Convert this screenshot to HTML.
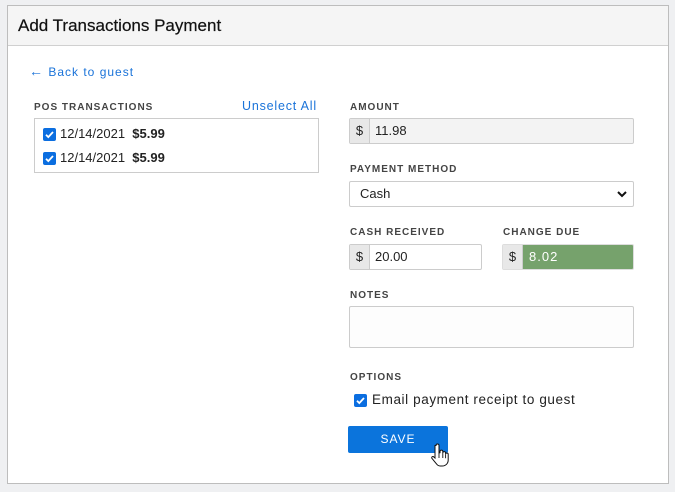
<!DOCTYPE html>
<html><head><style>
body{margin:0;width:675px;height:492px;background:#eff0f2;font-family:"Liberation Sans",sans-serif;position:relative;overflow:hidden}
.a{position:absolute}
.panel{left:7px;top:5px;width:660px;height:477px;background:#fff;border:1px solid #bdbdbd}
.hdr{left:0;top:0;width:660px;height:39px;background:#f5f5f5;border-bottom:1px solid #d0d0d0}
.lbl{font-size:10px;font-weight:bold;letter-spacing:1px;color:#444}
.inp{border:1px solid #ccc;border-radius:2px;height:26px;box-sizing:border-box;font-size:13px;color:#222}
.pre{position:absolute;left:0;top:0;bottom:0;width:19px;background:#e8e8e8;border-right:1px solid #ccc;text-align:center;line-height:24px}
.val{position:absolute;left:27px;top:0;line-height:24px}
</style></head><body>
<div class="a panel">
 <div class="a hdr"><div class="a" style="left:10px;top:10px;font-size:17px;color:#111;-webkit-text-stroke:0.2px #111">Add Transactions Payment</div></div>
</div>
<div class="a" style="left:29px;top:63px;font-size:12px;color:#1a73d9;letter-spacing:1px"><span style="font-size:14px">←</span> Back to guest</div>
<div class="a lbl" style="left:34px;top:102px">POS TRANSACTIONS</div>
<div class="a" style="left:242px;top:99px;font-size:12.5px;color:#1a73d9;letter-spacing:0.8px">Unselect All</div>
<div class="a" style="left:34px;top:118px;width:285px;height:55px;border:1px solid #ccc;box-sizing:border-box"></div>
<svg class="a" style="left:43px;top:128px" width="13" height="13"><rect width="13" height="13" rx="2" fill="#0b6ee0"/><path d="M3 6.8l2.3 2.3L10 4" stroke="#fff" stroke-width="1.8" fill="none"/></svg>
<div class="a" style="left:60px;top:126px;font-size:13px;color:#222">12/14/2021 &nbsp;<b>$5.99</b></div>
<svg class="a" style="left:43px;top:152px" width="13" height="13"><rect width="13" height="13" rx="2" fill="#0b6ee0"/><path d="M3 6.8l2.3 2.3L10 4" stroke="#fff" stroke-width="1.8" fill="none"/></svg>
<div class="a" style="left:60px;top:150px;font-size:13px;color:#222">12/14/2021 &nbsp;<b>$5.99</b></div>

<div class="a lbl" style="left:350px;top:102px">AMOUNT</div>
<div class="a inp" style="left:349px;top:118px;width:285px;background:#f3f3f3"><div class="pre">$</div><div class="val" style="left:25px">11.98</div></div>
<div class="a lbl" style="left:350px;top:164px">PAYMENT METHOD</div>
<div class="a inp" style="left:349px;top:181px;width:285px;background:#fff"><div class="val" style="left:10px">Cash</div>
<svg class="a" style="right:6px;top:9px" width="10" height="7"><path d="M1 1l4 4 4-4" stroke="#111" stroke-width="2" fill="none"/></svg></div>
<div class="a lbl" style="left:350px;top:227px">CASH RECEIVED</div>
<div class="a inp" style="left:349px;top:244px;width:133px;background:#fff"><div class="pre">$</div><div class="val" style="left:25px">20.00</div></div>
<div class="a lbl" style="left:503px;top:227px">CHANGE DUE</div>
<div class="a inp" style="left:502px;top:244px;width:132px;background:#76a26c;border-color:#ddd"><div class="pre">$</div><div class="val" style="left:26px;color:#fff;letter-spacing:1px">8.02</div></div>
<div class="a lbl" style="left:350px;top:290px">NOTES</div>
<div class="a inp" style="left:349px;top:306px;width:285px;height:42px;background:#fdfdfd"></div>
<div class="a lbl" style="left:350px;top:372px">OPTIONS</div>
<svg class="a" style="left:354px;top:394px" width="13" height="13"><rect width="13" height="13" rx="2" fill="#0b6ee0"/><path d="M3 6.8l2.3 2.3L10 4" stroke="#fff" stroke-width="1.8" fill="none"/></svg>
<div class="a" style="left:372px;top:392px;font-size:13.5px;color:#222;letter-spacing:0.6px">Email payment receipt to guest</div>
<div class="a" style="left:348px;top:426px;width:100px;height:27px;background:#0b74dc;border-radius:2px;color:#fff;font-size:12px;letter-spacing:1px;text-align:center;line-height:27px">SAVE</div>
<svg class="a" style="left:430px;top:443px" width="20" height="25" viewBox="0 0 20 25"><path d="M6 2.5a1.5 1.5 0 0 1 3 0V10l1-.3V8.5a1.4 1.4 0 0 1 2.8 0v1.5a1.4 1.4 0 0 1 2.8 0v1.3a1.3 1.3 0 0 1 2.6 0V17c0 3.5-2.5 6-6 6h-2c-2 0-3-1-4-2.5L2 15.5c-.7-1 0-2.3 1.2-2l1.8 1.5V2.5z" fill="#fff" stroke="#111" stroke-width="1"/><path d="M9 10v5M12.8 10v5M15.6 11.3v4" stroke="#111" stroke-width="0.9"/></svg>
</body></html>
